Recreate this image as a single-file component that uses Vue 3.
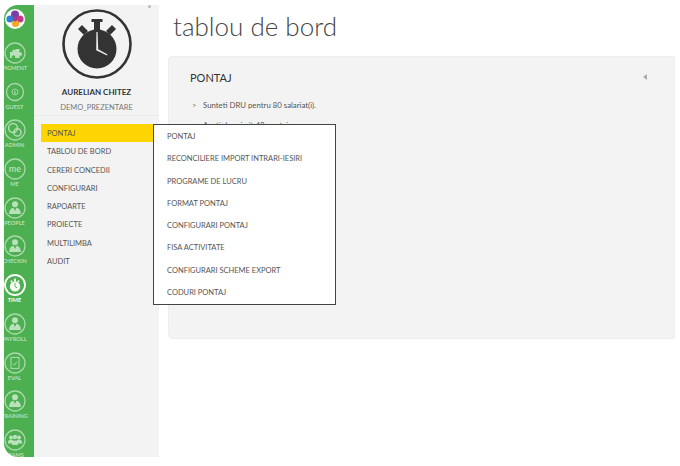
<script setup>
const railItems = [
  { label: "PIGMENT", icon: "puzzle" },
  { label: "GUEST", icon: "guest" },
  { label: "ADMIN", icon: "admin" },
  { label: "ME", icon: "me" },
  { label: "PEOPLE", icon: "person" },
  { label: "CHECKIN", icon: "person" },
  { label: "TIME", icon: "time", active: true },
  { label: "PAYROLL", icon: "person" },
  { label: "EVAL", icon: "eval" },
  { label: "TRAINING", icon: "person" },
  { label: "TEAMS", icon: "group" }
]

const sideMenu = ["PONTAJ", "TABLOU DE BORD", "CERERI CONCEDII", "CONFIGURARI", "RAPOARTE", "PROIECTE", "MULTILIMBA", "AUDIT"]

const popupMenu = [
  "PONTAJ",
  "RECONCILIERE IMPORT INTRARI-IESIRI",
  "PROGRAME DE LUCRU",
  "FORMAT PONTAJ",
  "CONFIGURARI PONTAJ",
  "FISA ACTIVITATE",
  "CONFIGURARI SCHEME EXPORT",
  "CODURI PONTAJ"
]

const notes = ["Sunteti DRU pentru 80 salariat(i).", "Aveti de primit 42 pontaje"]
</script>

<template>
  <div class="page">
    <nav class="rail">
      <div class="logo">
        <svg width="20" height="20" viewBox="0 0 20 20">
          <circle cx="10" cy="10" r="10" fill="#fff" />
          <circle cx="10" cy="5.500" r="4" fill="#7b3fa8" />
          <circle cx="5" cy="10" r="3.600" fill="#2f7fd6" />
          <circle cx="15" cy="10" r="3.600" fill="#c2378d" />
          <circle cx="10.500" cy="14.500" r="3.600" fill="#f7a823" />
          <circle cx="10" cy="10" r="2.400" fill="#a6398f" />
        </svg>
      </div>
      <div v-for="item in railItems" :key="item.label" class="rail-item" :class="{ active: item.active }">
        <svg class="rail-icon" width="22" height="22" viewBox="0 0 22 22">
          <circle cx="11" cy="11" :r="item.icon === 'guest' ? 8.5 : 10" fill="none" stroke="currentColor" :stroke-width="item.active ? 1.8 : 1.3" :opacity="item.active ? 1 : 0.55" />
          <g v-if="item.icon === 'puzzle'" fill="currentColor" opacity="0.65">
            <path d="M6 10h2.400a1.800 1.800 0 1 1 3.400-1.200L11.500 7h4v3.400a1.800 1.800 0 1 1 0 3.200V16H11a1.800 1.800 0 1 0-3 0H6z" />
          </g>
          <g v-else-if="item.icon === 'guest'" fill="none" stroke="currentColor" stroke-width="0.9" opacity="0.55">
            <circle cx="11" cy="11" r="3" />
            <path d="M11 9.400v3M9.800 11.600l1.200 1 1.200-1" />
          </g>
          <g v-else-if="item.icon === 'admin'" fill="none" stroke="currentColor" stroke-width="1.500" opacity="0.6">
            <circle cx="9" cy="9" r="4.400" />
            <circle cx="13.400" cy="13.400" r="3.600" />
          </g>
          <text v-else-if="item.icon === 'me'" class="me-text" x="11" y="14.200" text-anchor="middle">me</text>
          <g v-else-if="item.icon === 'person'" fill="currentColor" opacity="0.65">
            <circle cx="11" cy="7.200" r="3" />
            <path d="M5.200 17c0-4 2-6 4.400-6.200L11 14l1.400-3.200c2.400.2 4.400 2.200 4.400 6.200z" />
          </g>
          <g v-else-if="item.icon === 'time'" fill="currentColor">
            <circle cx="11" cy="12.400" r="5.200" />
            <rect x="10" y="4.600" width="2" height="2.600" />
            <path d="M6.200 7.400l1.400-1.400 1.200 1.200-1.400 1.400zM15.800 7.400l-1.400-1.400-1.200 1.200 1.400 1.400z" />
            <path d="M11 9v3.600l2 1.200" fill="none" stroke="#4caf50" stroke-width="0.9" />
          </g>
          <g v-else-if="item.icon === 'eval'" fill="none" stroke="currentColor" stroke-width="1" opacity="0.6">
            <rect x="7" y="5.400" width="8" height="11" />
            <path d="M9 11.600l1.400 1.600 2.400-3.400" />
          </g>
          <g v-else fill="currentColor" opacity="0.65">
            <circle cx="7" cy="8.400" r="1.900" />
            <circle cx="15" cy="8.400" r="1.900" />
            <circle cx="11" cy="8" r="2.200" />
            <path d="M3.800 14.600c0-2.400 1.200-4 3.200-4s3.200 1.600 3.200 4zM11.800 14.600c0-2.400 1.200-4 3.200-4s3.200 1.600 3.200 4z" />
            <path d="M8 16c0-2.800 1.200-4.600 3-4.600s3 1.800 3 4.600z" />
          </g>
        </svg>
        <span class="rail-label">{{ item.label }}</span>
      </div>
    </nav>

    <aside class="sidebar">
      <span class="pin"></span>
      <div class="profile">
        <svg width="70" height="70" viewBox="0 0 70 70">
          <circle cx="35" cy="35" r="33.500" fill="none" stroke="#333" stroke-width="2.600" />
          <rect x="32" y="11" width="6" height="10" fill="#333" />
          <rect x="29.500" y="10" width="11" height="3" fill="#333" />
          <path d="M16 20l4-4 6 6-4 4zM54 20l-4-4-6 6 4 4z" fill="#333" />
          <circle cx="35" cy="40" r="19.500" fill="#333" />
          <path d="M34.400 23h1.200l.6 17.200 9.400 5.400-.6 1-10.800-5.400z" fill="#eee" />
        </svg>
        <div class="user-name">AURELIAN CHITEZ</div>
        <div class="user-org">DEMO_PREZENTARE</div>
      </div>
      <ul class="side-menu">
        <li v-for="(entry, index) in sideMenu" :key="entry" :class="{ selected: index === 0 }">{{ entry }}</li>
      </ul>
    </aside>

    <main class="content">
      <h1 class="title">tablou de bord</h1>
      <section class="panel">
        <header class="panel-head">
          <h2>PONTAJ</h2>
          <span class="collapse"></span>
        </header>
        <ul class="notes">
          <li v-for="note in notes" :key="note"><span class="chev">&gt;</span>{{ note }}</li>
        </ul>
      </section>
    </main>

    <ul class="popup">
      <li v-for="entry in popupMenu" :key="entry">{{ entry }}</li>
    </ul>
  </div>
</template>

<style>
html, body {
  margin: 0;
  background: #fff;
}
</style>

<style scoped>
.page {
  position: relative;
  display: flex;
  width: 680px;
  height: 466px;
  padding: 5px 5px 9px 4px;
  box-sizing: border-box;
  overflow: hidden;
  font-family: Lato, "Liberation Sans", sans-serif;
  color: #555;
}

.rail {
  flex: 0 0 30px;
  background: #4caf50;
  border-radius: 14px 0 0 14px;
  overflow: hidden;
  color: #fff;
}

.logo {
  display: flex;
  justify-content: center;
  width: 40px;
  margin: 4px 0 0 -9.500px;
  height: 33px;
}

.rail-item {
  display: flex;
  flex-direction: column;
  align-items: center;
  width: 50px;
  height: 38.700px;
  margin-left: -14.500px;
  color: rgba(255, 255, 255, 0.95);
}

.rail-icon {
  display: block;
  flex: none;
}

.rail-label {
  font-size: 5.600px;
  line-height: 8px;
  font-weight: 700;
  white-space: nowrap;
  color: rgba(255, 255, 255, 0.6);
}

.rail-item.active .rail-label {
  color: #fff;
}

.me-text {
  font-size: 9px;
  font-weight: 700;
  fill: currentColor;
  opacity: 0.6;
}

.sidebar {
  position: relative;
  flex: 0 0 125px;
  background: #f3f3f3;
}

.pin {
  position: absolute;
  top: 0;
  right: 8px;
  width: 3px;
  height: 3px;
  background: #bbb;
  border-radius: 50%;
}

.profile {
  display: flex;
  flex-direction: column;
  align-items: center;
  padding-top: 4px;
  height: 111px;
  box-sizing: border-box;
  border-bottom: 1px solid #ebebeb;
}

.user-name {
  margin-top: 7px;
  font-size: 8px;
  line-height: 12px;
  font-weight: 700;
  color: #333;
}

.user-org {
  margin-top: 4px;
  font-size: 7.500px;
  line-height: 12px;
  color: #777;
}

.side-menu {
  list-style: none;
  margin: 8px 0 0 7px;
  padding: 0;
}

.side-menu li {
  height: 18.300px;
  line-height: 20px;
  padding-left: 6px;
  font-size: 7.500px;
}

.side-menu li.selected {
  background: #ffd500;
}

.content {
  flex: 1;
  min-width: 0;
  padding: 0 0 0 9px;
}

.title {
  margin: 0 0 0 5px;
  height: 51px;
  font-size: 26px;
  line-height: 42px;
  font-weight: 300;
  color: #444;
}

.panel {
  height: 283px;
  box-sizing: border-box;
  padding: 11px 22px 0 21px;
  background: #f3f3f3;
  border: 1px solid #eeeeee;
  border-radius: 4px 0 0 4px;
}

.panel-head {
  display: flex;
  justify-content: space-between;
  align-items: center;
  height: 18px;
  padding-right: 5px;
}

.panel-head h2 {
  margin: 0;
  font-size: 11px;
  font-weight: 400;
  color: #333;
}

.collapse {
  width: 0;
  height: 0;
  border-style: solid;
  border-width: 3px 4px 3px 0;
  border-color: transparent #aaa transparent transparent;
}

.notes {
  list-style: none;
  margin: 9px 0 0;
  padding: 0;
  font-size: 7.800px;
}

.notes li {
  height: 20px;
  line-height: 20px;
}

.chev {
  display: inline-block;
  width: 11px;
  margin-left: 2px;
  color: #777;
}

.popup {
  position: absolute;
  left: 153px;
  top: 124px;
  width: 183px;
  height: 181px;
  box-sizing: border-box;
  list-style: none;
  margin: 0;
  padding: 1px 0 0 13px;
  background: #fff;
  border: 1.500px solid #444;
  font-size: 7.500px;
}

.popup li {
  height: 22.300px;
  line-height: 22.300px;
  white-space: nowrap;
}
</style>
